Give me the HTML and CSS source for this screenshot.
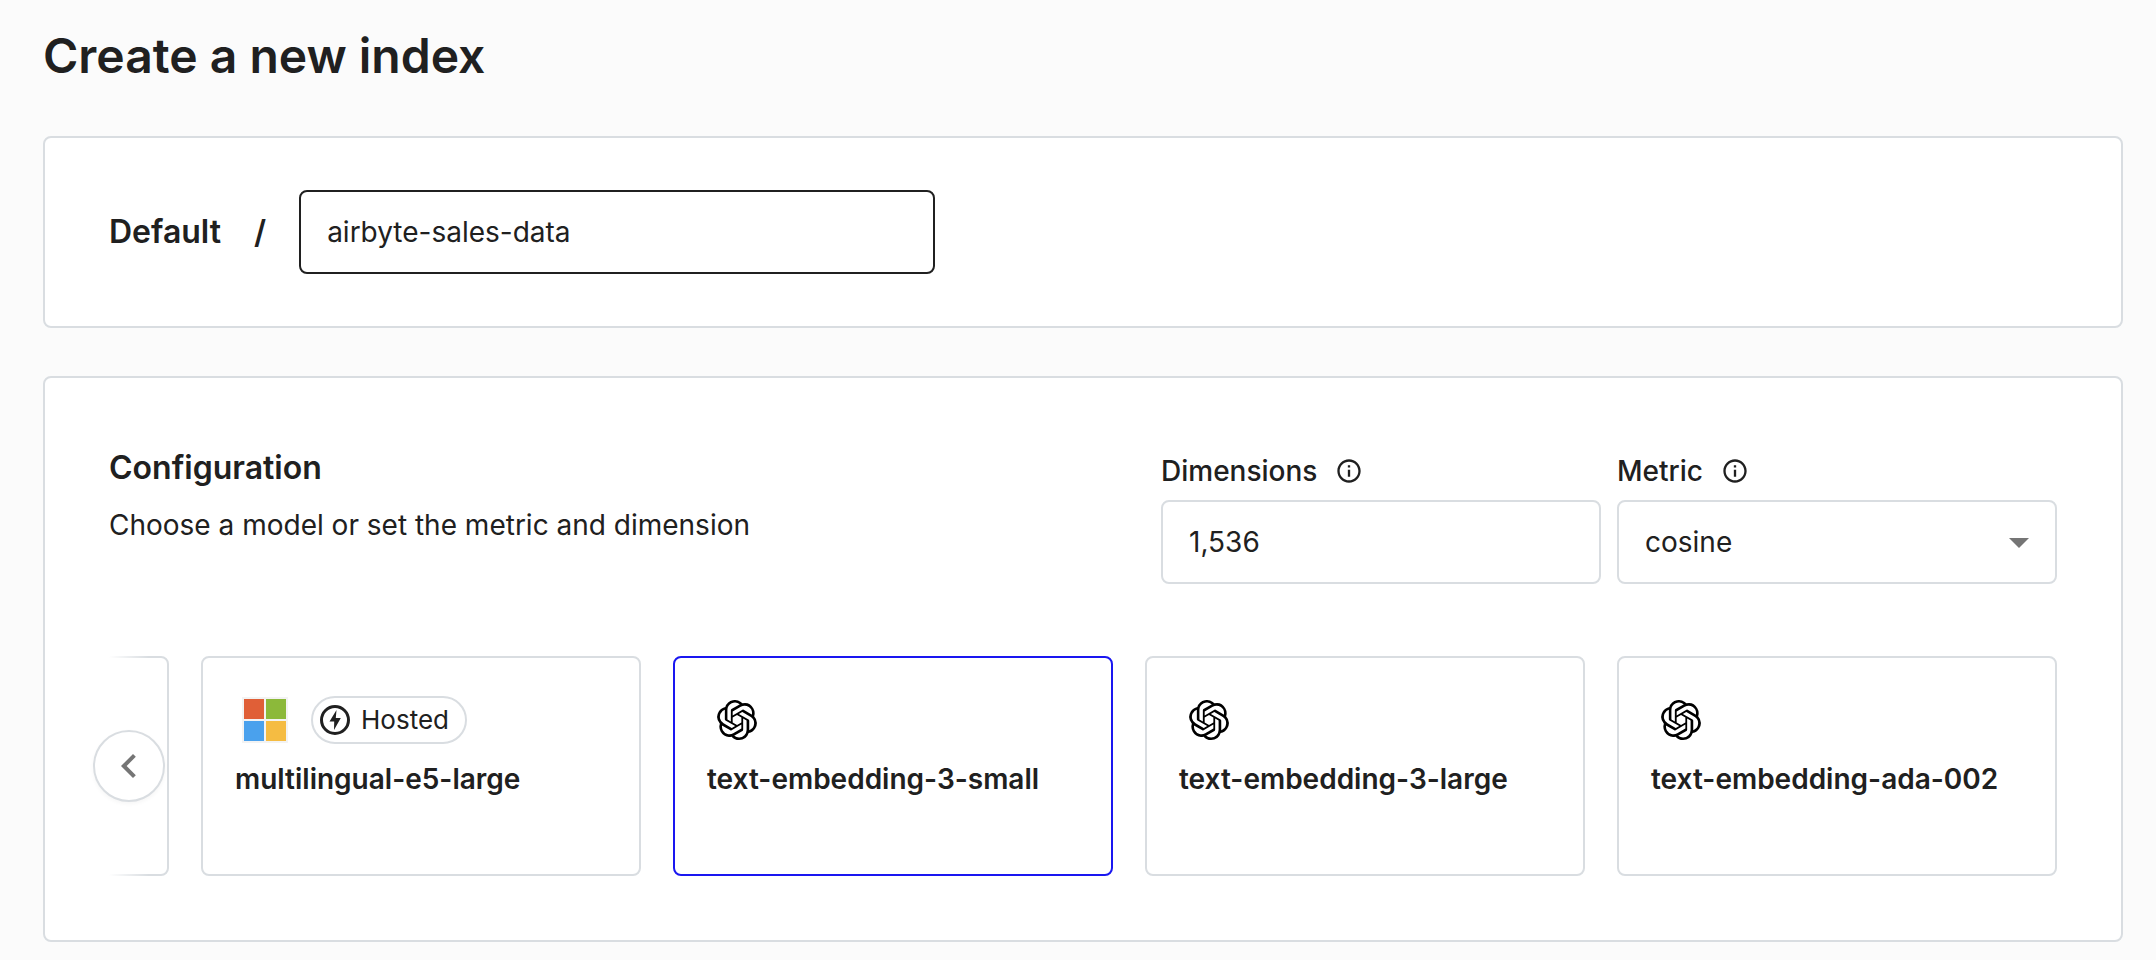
FILE: index.html
```html
<!DOCTYPE html>
<html lang="en">
<head>
    <meta charset="UTF-8">
    <meta name="viewport" content="width=device-width, initial-scale=1.0">
    <title>Create a new index</title>
    <link rel="stylesheet" href="styles.css">
</head>
<body>
    <svg class="sprite" aria-hidden="true">
        <symbol id="openai" viewBox="0 0 24 24">
            <path d="M22.2819 9.8211a5.9847 5.9847 0 0 0-.5157-4.9108 6.0462 6.0462 0 0 0-6.5098-2.9A6.0651 6.0651 0 0 0 4.9807 4.1818a5.9847 5.9847 0 0 0-3.9977 2.9 6.0462 6.0462 0 0 0 .7427 7.0966 5.98 5.98 0 0 0 .511 4.9107 6.051 6.051 0 0 0 6.5146 2.9001A5.9847 5.9847 0 0 0 13.2599 24a6.0557 6.0557 0 0 0 5.7718-4.2058 5.9894 5.9894 0 0 0 3.9977-2.9001 6.0557 6.0557 0 0 0-.7475-7.0729zm-9.022 12.6081a4.4755 4.4755 0 0 1-2.8764-1.0408l.1419-.0804 4.7783-2.7582a.7948.7948 0 0 0 .3927-.6813v-6.7369l2.02 1.1686a.071.071 0 0 1 .038.052v5.5826a4.504 4.504 0 0 1-4.4945 4.4944zm-9.6607-4.1254a4.4708 4.4708 0 0 1-.5346-3.0137l.142.0852 4.783 2.7582a.7712.7712 0 0 0 .7806 0l5.8428-3.3685v2.3324a.0804.0804 0 0 1-.0332.0615L9.74 19.9502a4.4992 4.4992 0 0 1-6.1408-1.6464zM2.3408 7.8956a4.485 4.485 0 0 1 2.3655-1.9728V11.6a.7664.7664 0 0 0 .3879.6765l5.8144 3.3543-2.0201 1.1685a.0757.0757 0 0 1-.071 0l-4.8303-2.7865A4.504 4.504 0 0 1 2.3408 7.872zm16.5963 3.8558L13.1038 8.364 15.1192 7.2a.0757.0757 0 0 1 .071 0l4.8303 2.7913a4.4944 4.4944 0 0 1-.6765 8.1042v-5.6772a.79.79 0 0 0-.407-.667zm2.0107-3.0231l-.142-.0852-4.7735-2.7818a.7759.7759 0 0 0-.7854 0L9.409 9.2297V6.8974a.0662.0662 0 0 1 .0284-.0615l4.8303-2.7866a4.4992 4.4992 0 0 1 6.6802 4.66zM8.3065 12.863l-2.02-1.1638a.0804.0804 0 0 1-.038-.0567V6.0742a4.4992 4.4992 0 0 1 7.3757-3.4537l-.142.0805L8.704 5.459a.7948.7948 0 0 0-.3927.6813zm1.0976-2.3654l2.602-1.4998 2.6069 1.4998v2.9994l-2.5974 1.4997-2.6067-1.4997Z"/>
        </symbol>
        <symbol id="info" viewBox="0 0 24 24">
            <path d="M11 7h2v2h-2zm0 4h2v6h-2zm1-9C6.48 2 2 6.48 2 12s4.48 10 10 10 10-4.48 10-10S17.52 2 12 2zm0 18c-4.41 0-8-3.59-8-8s3.59-8 8-8 8 3.59 8 8-3.59 8-8 8z"/>
        </symbol>
    </svg>

    <main class="page">
        <h1>Create a new index</h1>

        <section class="panel name-panel">
            <label class="project" for="indexName">Default</label>
            <span class="slash">/</span>
            <input class="field name-input" type="text" id="indexName" value="airbyte-sales-data">
        </section>

        <section class="panel config-panel">
            <div class="config-header">
                <div class="config-text">
                    <h2>Configuration</h2>
                    <p>Choose a model or set the metric and dimension</p>
                </div>
                <div class="config-field">
                    <div class="label-row">
                        <label for="dimensions">Dimensions</label>
                        <svg class="info-icon" aria-hidden="true"><use href="#info"/></svg>
                    </div>
                    <input class="field" type="text" id="dimensions" value="1,536">
                </div>
                <div class="config-field">
                    <div class="label-row">
                        <label for="metric">Metric</label>
                        <svg class="info-icon" aria-hidden="true"><use href="#info"/></svg>
                    </div>
                    <div class="select-wrap">
                        <select class="field" id="metric">
                            <option>cosine</option>
                        </select>
                        <svg class="select-arrow" viewBox="0 0 24 24" aria-hidden="true"><path d="M7 10l5 5 5-5z"/></svg>
                    </div>
                </div>
            </div>

            <div class="carousel">
                <div class="track">
                    <div class="model-card"></div>
                    <button class="model-card" type="button">
                        <span class="model-top">
                            <span class="logo">
                                <svg class="microsoft" viewBox="0 0 46 46" aria-hidden="true">
                                    <path fill="#f3f3f3" d="M0 0h46v46H0z"/>
                                    <path fill="#e05f37" d="M2 2h20v20H2z"/>
                                    <path fill="#8cb93a" d="M24 2h20v20H24z"/>
                                    <path fill="#4aa1ed" d="M2 24h20v20H2z"/>
                                    <path fill="#f5bc42" d="M24 24h20v20H24z"/>
                                </svg>
                            </span>
                            <span class="badge">
                                <svg class="bolt" viewBox="0 0 30 30" aria-hidden="true">
                                    <circle cx="15" cy="15" r="13.5"/>
                                    <path d="M16.5 5 9.5 16.5h4.7L14 25l6.8-12h-5z"/>
                                </svg>
                                Hosted
                            </span>
                        </span>
                        <span class="model-name">multilingual-e5-large</span>
                    </button>
                    <button class="model-card selected" type="button">
                        <span class="model-top">
                            <span class="logo"><svg class="openai" aria-hidden="true"><use href="#openai"/></svg></span>
                        </span>
                        <span class="model-name">text-embedding-3-small</span>
                    </button>
                    <button class="model-card" type="button">
                        <span class="model-top">
                            <span class="logo"><svg class="openai" aria-hidden="true"><use href="#openai"/></svg></span>
                        </span>
                        <span class="model-name">text-embedding-3-large</span>
                    </button>
                    <button class="model-card" type="button">
                        <span class="model-top">
                            <span class="logo"><svg class="openai" aria-hidden="true"><use href="#openai"/></svg></span>
                        </span>
                        <span class="model-name">text-embedding-ada-002</span>
                    </button>
                </div>
                <button class="scroll-btn" type="button" aria-label="Previous models">
                    <svg viewBox="0 0 24 24" aria-hidden="true"><path d="M15.41 7.41 14 6l-6 6 6 6 1.41-1.41L10.83 12z"/></svg>
                </button>
            </div>
        </section>
    </main>
</body>
</html>
```

FILE: styles.css
```css
* { margin: 0; padding: 0; box-sizing: border-box; }
body { font-family: Inter, 'Liberation Sans', sans-serif; font-size: 28px; line-height: 40px; color: #202020; background: #fbfbfb; }
button, input, select { font: inherit; color: inherit; }
.sprite { position: absolute; width: 0; height: 0; }
.page { padding: 24px 33px 18px 43px; }
h1 { font-size: 48px; line-height: 64px; font-weight: 600; margin-bottom: 48px; }
h2 { font-size: 32px; line-height: 52px; font-weight: 600; }

.panel { background: white; border: 2px solid #d9dde1; border-radius: 8px; }
.name-panel { display: flex; align-items: center; gap: 33px; padding: 52px 64px; margin-bottom: 48px; }
.project, .slash { font-size: 32px; font-weight: 600; }
.field { display: block; width: 100%; height: 84px; padding: 0 26px; border: 2px solid #d9dde1; border-radius: 8px; background: white; outline: none; }
.name-input { flex: 0 1 636px; min-width: 0; border-color: #202020; }

.config-panel { padding: 64px; }
.config-header { display: grid; grid-template-columns: 1fr 440px 440px; gap: 16px; margin-bottom: 72px; }
.config-text p { margin-top: 11px; }
.label-row { display: flex; align-items: center; gap: 18px; height: 58px; font-weight: 500; }
.info-icon { width: 28px; height: 28px; fill: #202020; }
.select-wrap { position: relative; }
select.field { appearance: none; }
.select-arrow { position: absolute; top: 18px; right: 14px; width: 48px; height: 48px; fill: #757575; pointer-events: none; }

.carousel { position: relative; }
.track { display: flex; justify-content: flex-end; gap: 32px; overflow: hidden; }
/* fade the card that is scrolled out on the left */
.carousel::before { content: ''; position: absolute; z-index: 1; top: 0; bottom: 0; left: 0; width: 40px; background: linear-gradient(to right, white, transparent); }
.model-card { flex: 0 0 440px; display: flex; flex-direction: column; gap: 8px; height: 220px; padding: 32px; border: 2px solid #d9dde1; border-radius: 8px; background: white; text-align: left; cursor: pointer; }
.model-card.selected { border-color: #1a17f0; }
.model-top { display: flex; align-items: center; gap: 16px; }
.logo { display: flex; align-items: center; justify-content: center; width: 60px; height: 60px; }
.microsoft { width: 46px; height: 46px; }
.openai { width: 40px; height: 40px; fill: black; }
.badge { display: flex; align-items: center; gap: 11px; height: 48px; padding: 0 16px 0 7px; border: 2px solid #d9dde1; border-radius: 24px; font-size: 26px; }
.bolt { width: 30px; height: 30px; fill: #202020; }
.bolt circle { fill: none; stroke: #202020; stroke-width: 3; }
.model-name { font-weight: 600; line-height: 42px; }
.scroll-btn { position: absolute; z-index: 2; top: 74px; left: -16px; display: flex; align-items: center; justify-content: center; width: 72px; height: 72px; border: 2px solid #d9dde1; border-radius: 50%; background: white; box-shadow: 0 2px 4px rgba(0,0,0,0.04); cursor: pointer; }
.scroll-btn svg { width: 48px; height: 48px; fill: #757575; }
```
